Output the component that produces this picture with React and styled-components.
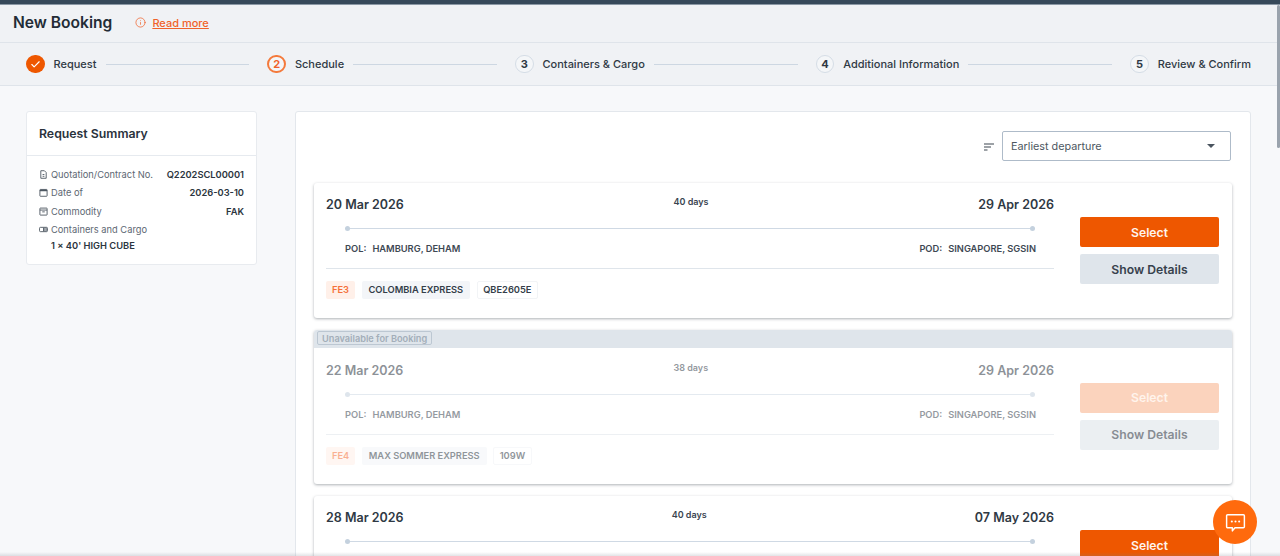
import React from "react";
import styled, { createGlobalStyle } from "styled-components";
import { Info, Check } from "lucide-react";

const Global = createGlobalStyle`
  html, body { margin: 0; padding: 0; height: 556px; overflow: hidden; background: #f7f8fa; }
  * { box-sizing: border-box; }
  body { font-family: Inter, "Liberation Sans", sans-serif; color: #2c3540; }
`;

const Page = styled.div`
  position: relative;
  width: 1280px;
  height: 556px;
  overflow: hidden;
  background: #f7f8fa;
`;
const TopBar = styled.div`
  height: 5px;
  background: #37495a;
  border-bottom: 1px solid #8b98a5;
`;
const Header = styled.header`
  height: 38px;
  display: flex;
  align-items: center;
  padding: 0 13px 2px;
  background: #f0f2f5;
  border-bottom: 1px solid #dfe4ea;
`;
const Title = styled.h1`
  margin: 0 23px 0 0;
  font-size: 15.6px;
  line-height: 20px;
  font-weight: 600;
  color: #232c36;
`;
const ReadMore = styled.a`
  display: flex;
  align-items: center;
  gap: 6px;
  font-size: 11px;
  font-weight: 500;
  color: #f0622a;
  text-decoration: underline;
`;
const Stepper = styled.nav`
  height: 43px;
  display: flex;
  align-items: center;
  padding: 0 29px 0 26px;
  background: #f0f2f5;
  border-bottom: 1px solid #dfe4ea;
`;
const StepItem = styled.div`
  display: flex;
  align-items: center;
  flex: ${(p) => (p.$last ? "0 0 auto" : "1 1 auto")};
`;
const Circle = styled.span`
  width: 18.5px;
  height: 18.5px;
  flex: none;
  border-radius: 50%;
  display: flex;
  align-items: center;
  justify-content: center;
  font-size: 11px;
  font-weight: 700;
  color: ${(p) => (p.$state === "active" ? "#f0622a" : p.$state === "done" ? "#fff" : "#2f3944")};
  background: ${(p) => (p.$state === "done" ? "#ee5700" : "#f4f6f8")};
  border: ${(p) =>
    p.$state === "done" ? "none" : p.$state === "active" ? "2px solid #f47a3c" : "1.5px solid #d5dde6"};
`;
const StepLabel = styled.span`
  margin-left: 9px;
  font-size: 11px;
  font-weight: 500;
  color: #2f3944;
  white-space: nowrap;
`;
const StepLine = styled.span`
  flex: 1;
  height: 1px;
  background: #cdd7e2;
  margin: 0 18px 0 9px;
`;
const Body = styled.main`
  display: flex;
  align-items: flex-start;
  padding: 25px 29px 0 26px;
  gap: 38px;
`;
const Summary = styled.aside`
  width: 231px;
  flex: none;
  background: #fff;
  border: 1px solid #e8ebef;
  border-radius: 3px;
`;
const SummaryTitle = styled.h2`
  margin: 0;
  height: 44px;
  padding: 0 12px;
  display: flex;
  align-items: center;
  font-size: 12.3px;
  font-weight: 600;
  color: #2a323c;
  border-bottom: 1px solid #e6eaef;
`;
const SummaryBody = styled.div`
  padding: 9px 12px 11px;
`;
const SummaryRow = styled.div`
  height: 18.5px;
  display: flex;
  align-items: center;
  font-size: 9.3px;
  color: #5d6772;
`;
const RowIcon = styled.svg`
  width: 9px;
  height: 9px;
  flex: none;
  margin-right: 3px;
  fill: none;
  stroke: #4d5761;
  stroke-width: 1;
`;
const RowValue = styled.span`
  margin-left: auto;
  font-weight: 600;
  color: #2c3540;
`;
const CargoValue = styled.div`
  margin: 0 0 0 12px;
  font-size: 9.3px;
  line-height: 14px;
  font-weight: 600;
  color: #2c3540;
`;
const Panel = styled.section`
  flex: 1;
  height: 600px;
  padding: 19px 18px 0 18px;
  background: #fff;
  border: 1px solid #e3e7ec;
  border-radius: 3px;
`;
const SortRow = styled.div`
  display: flex;
  justify-content: flex-end;
  align-items: center;
  margin: 0 1px 22px 0;
`;
const SortIcon = styled.svg`
  width: 10px;
  height: 8px;
  margin: 1px 8px 0 0;
  stroke: #3c4651;
  stroke-width: 1.1;
`;
const SortSelect = styled.div`
  width: 229px;
  height: 30px;
  padding: 0 15px 0 8px;
  display: flex;
  align-items: center;
  justify-content: space-between;
  font-size: 10.8px;
  color: #4d5761;
  background: #fff;
  border: 1px solid #aebbc9;
  border-radius: 2px;
`;
const Caret = styled.span`
  width: 0;
  height: 0;
  border-left: 4px solid transparent;
  border-right: 4px solid transparent;
  border-top: 4px solid #4a545f;
`;
const Card = styled.article`
  margin-bottom: 12px;
  background: #fff;
  border-radius: 3px;
  box-shadow: 0 1px 3px rgba(40, 50, 60, 0.38);
  overflow: hidden;
`;
const Banner = styled.div`
  height: 18px;
  padding: 1px 3px;
  background: #dfe5eb;
`;
const BannerTag = styled.span`
  display: inline-block;
  height: 14px;
  padding: 0 4px;
  font-size: 9.2px;
  line-height: 13.5px;
  font-weight: 600;
  color: #a3aeb9;
  border: 1px solid #bcc7d2;
  border-radius: 2px;
  vertical-align: top;
`;
const CardBody = styled.div`
  display: flex;
  height: ${(p) => (p.$tall ? "136px" : "135px")};
  padding: 0 13px 0 12px;
`;
const Details = styled.div`
  flex: 1;
  padding-top: ${(p) => (p.$dim ? 14 : 13)}px;
  opacity: ${(p) => (p.$dim ? 0.55 : 1)};
`;
const DatesRow = styled.div`
  display: flex;
  justify-content: space-between;
  align-items: flex-start;
  height: 18px;
`;
const DateText = styled.span`
  font-size: 12.5px;
  line-height: 18px;
  font-weight: 600;
  color: #2f3944;
`;
const Days = styled.span`
  margin-top: -3px;
  font-size: 9px;
  line-height: 18px;
  font-weight: 600;
  color: #3a444f;
`;
const Route = styled.div`
  position: relative;
  height: 1px;
  margin: 14px 19px 0;
  background: #cfd9e4;
  &::before, &::after {
    content: "";
    position: absolute;
    top: -2px;
    width: 5px;
    height: 5px;
    border-radius: 50%;
    background: #c4d1de;
  }
  &::before { left: 0; }
  &::after { right: 0; }
`;
const Ports = styled.div`
  display: flex;
  justify-content: space-between;
  margin: 13px 18px 0 19px;
  height: 13px;
  font-size: 9.3px;
  line-height: 13px;
  font-weight: 600;
  color: #3e4853;
`;
const PortLabel = styled.span`
  margin-right: 6px;
`;
const Divider = styled.hr`
  margin: 13px 0 12px;
  border: 0;
  height: 1px;
  background: #dfe5eb;
`;
const Tags = styled.div`
  display: flex;
  gap: 6.5px;
`;
const tagPadding = { service: 6, vessel: 7, voyage: 5.5 };
const Tag = styled.span`
  height: 18px;
  padding: 0 ${(p) => tagPadding[p.$kind]}px;
  font-size: 9.3px;
  font-weight: 600;
  border-radius: 2px;
  color: ${(p) => (p.$kind === "service" ? "#f5703a" : "#343e49")};
  background: ${(p) => (p.$kind === "service" ? "#fff0e9" : p.$kind === "vessel" ? "#f3f5f8" : "#fff")};
  border: ${(p) => (p.$kind === "voyage" ? "1px solid #f2f4f6" : "none")};
  line-height: ${(p) => (p.$kind === "voyage" ? "16px" : "18px")};
`;
const Actions = styled.div`
  width: 139px;
  flex: none;
  margin-left: 26px;
  display: flex;
  flex-direction: column;
  justify-content: center;
  gap: 7px;
`;
const Btn = styled.button`
  height: 30px;
  flex: none;
  border: 0;
  border-radius: 2px;
  font-family: inherit;
  font-size: 12.2px;
  font-weight: 600;
  color: #37414c;
  background: #dfe5eb;
  opacity: ${(p) => (p.$dim ? 0.6 : 1)};
`;
const SelectBtn = styled(Btn)`
  color: #fff4ec;
  background: ${(p) => (p.$dim ? "#fbd3bd" : "#ee5700")};
  opacity: 1;
`;
const ButtonSpacer = styled.div`
  height: 30px;
  flex: none;
`;
const Scrollbar = styled.div`
  position: absolute;
  top: 5px;
  right: 0;
  width: 3px;
  height: 143px;
  background: #9aa3ad;
  border-radius: 2px;
`;
const BottomFade = styled.div`
  position: absolute;
  left: 0;
  right: 0;
  bottom: 0;
  height: 4px;
  background: linear-gradient(to bottom, rgba(120, 130, 140, 0), rgba(120, 130, 140, 0.22));
`;
const Chat = styled.button`
  position: absolute;
  left: 1213px;
  top: 500px;
  width: 44px;
  height: 44px;
  padding: 0;
  border: 0;
  border-radius: 50%;
  background: #ff6a0d;
  display: flex;
  align-items: center;
  justify-content: center;
`;

const steps = [
  { label: "Request", state: "done" },
  { label: "Schedule", n: 2, state: "active" },
  { label: "Containers & Cargo", n: 3 },
  { label: "Additional Information", n: 4 },
  { label: "Review & Confirm", n: 5 },
];

const cards = [
  { from: "20 Mar 2026", to: "29 Apr 2026", days: "40 days", service: "FE3", vessel: "COLOMBIA EXPRESS", voyage: "QBE2605E" },
  { from: "22 Mar 2026", to: "29 Apr 2026", days: "38 days", service: "FE4", vessel: "MAX SOMMER EXPRESS", voyage: "109W", off: true },
  { from: "28 Mar 2026", to: "07 May 2026", days: "40 days", belowFold: true },
];

function Booking({ c }) {
  return (
    <Card>
      {c.off && (
        <Banner>
          <BannerTag>Unavailable for Booking</BannerTag>
        </Banner>
      )}
      <CardBody $tall={c.off}>
        <Details $dim={c.off}>
          <DatesRow>
            <DateText>{c.from}</DateText>
            <Days>{c.days}</Days>
            <DateText>{c.to}</DateText>
          </DatesRow>
          <Route />
          {!c.belowFold && (
            <>
              <Ports>
                <span><PortLabel>POL:</PortLabel>HAMBURG, DEHAM</span>
                <span><PortLabel>POD:</PortLabel>SINGAPORE, SGSIN</span>
              </Ports>
              <Divider />
              <Tags>
                <Tag $kind="service">{c.service}</Tag>
                <Tag $kind="vessel">{c.vessel}</Tag>
                <Tag $kind="voyage">{c.voyage}</Tag>
              </Tags>
            </>
          )}
        </Details>
        <Actions>
          <SelectBtn $dim={c.off}>Select</SelectBtn>
          {c.belowFold ? <ButtonSpacer /> : <Btn $dim={c.off}>Show Details</Btn>}
        </Actions>
      </CardBody>
    </Card>
  );
}

export default function App() {
  return (
    <Page>
      <Global />
      <TopBar />
      <Header>
        <Title>New Booking</Title>
        <ReadMore>
          <Info size={11} strokeWidth={1.6} />
          <span>Read more</span>
        </ReadMore>
      </Header>
      <Stepper>
        {steps.map((s, i) => (
          <StepItem key={s.label} $last={i === steps.length - 1}>
            <Circle $state={s.state}>
              {s.state === "done" ? <Check size={11} strokeWidth={2.5} /> : s.n}
            </Circle>
            <StepLabel>{s.label}</StepLabel>
            {i < steps.length - 1 && <StepLine />}
          </StepItem>
        ))}
      </Stepper>
      <Body>
        <Summary>
          <SummaryTitle>Request Summary</SummaryTitle>
          <SummaryBody>
            <SummaryRow>
              <RowIcon viewBox="0 0 10 10">
                <path d="M2 .8h4l2 2v6.400H2z" />
                <path d="M4 5h2M4 7h2" />
              </RowIcon>
              Quotation/Contract No.
              <RowValue>Q2202SCL00001</RowValue>
            </SummaryRow>
            <SummaryRow>
              <RowIcon viewBox="0 0 10 10">
                <rect x="1" y="1.600" width="8" height="7.600" rx=".6" />
                <path d="M1 2.800h8" strokeWidth="1.6" />
              </RowIcon>
              Date of
              <RowValue>2026-03-10</RowValue>
            </SummaryRow>
            <SummaryRow>
              <RowIcon viewBox="0 0 10 10">
                <rect x="1" y="1.200" width="8" height="7.800" rx=".5" />
                <path d="M1 3.400h8M3.600 5.400h2.800" />
              </RowIcon>
              Commodity
              <RowValue>FAK</RowValue>
            </SummaryRow>
            <SummaryRow>
              <RowIcon viewBox="0 0 10 10">
                <rect x=".6" y="2.600" width="8.800" height="4.800" rx="1" />
                <path d="M5 3v4M6.500 3v4M8 3v4" />
              </RowIcon>
              Containers and Cargo
            </SummaryRow>
            <CargoValue>1 × 40' HIGH CUBE</CargoValue>
          </SummaryBody>
        </Summary>
        <Panel>
          <SortRow>
            <SortIcon viewBox="0 0 10 8">
              <path d="M0 1h10M0 4h7M0 7h3.500" />
            </SortIcon>
            <SortSelect>
              Earliest departure
              <Caret />
            </SortSelect>
          </SortRow>
          {cards.map((c) => (
            <Booking key={c.from} c={c} />
          ))}
        </Panel>
      </Body>
      <BottomFade />
      <Scrollbar />
      <Chat aria-label="Chat">
        <svg width="23" height="23" viewBox="0 0 22 22" fill="none" stroke="#fff" strokeWidth="1.4">
          <path d="M3.500 3.500h15a1 1 0 0 1 1 1v10.500a1 1 0 0 1-1 1H10.500l-2.500 3v-3H3.500a1 1 0 0 1-1-1V4.500a1 1 0 0 1 1-1z" strokeLinejoin="round" />
          <circle cx="7.500" cy="10" r="1" fill="#fff" stroke="none" />
          <circle cx="11" cy="10" r="1" fill="#fff" stroke="none" />
          <circle cx="14.500" cy="10" r="1" fill="#fff" stroke="none" />
        </svg>
      </Chat>
    </Page>
  );
}
